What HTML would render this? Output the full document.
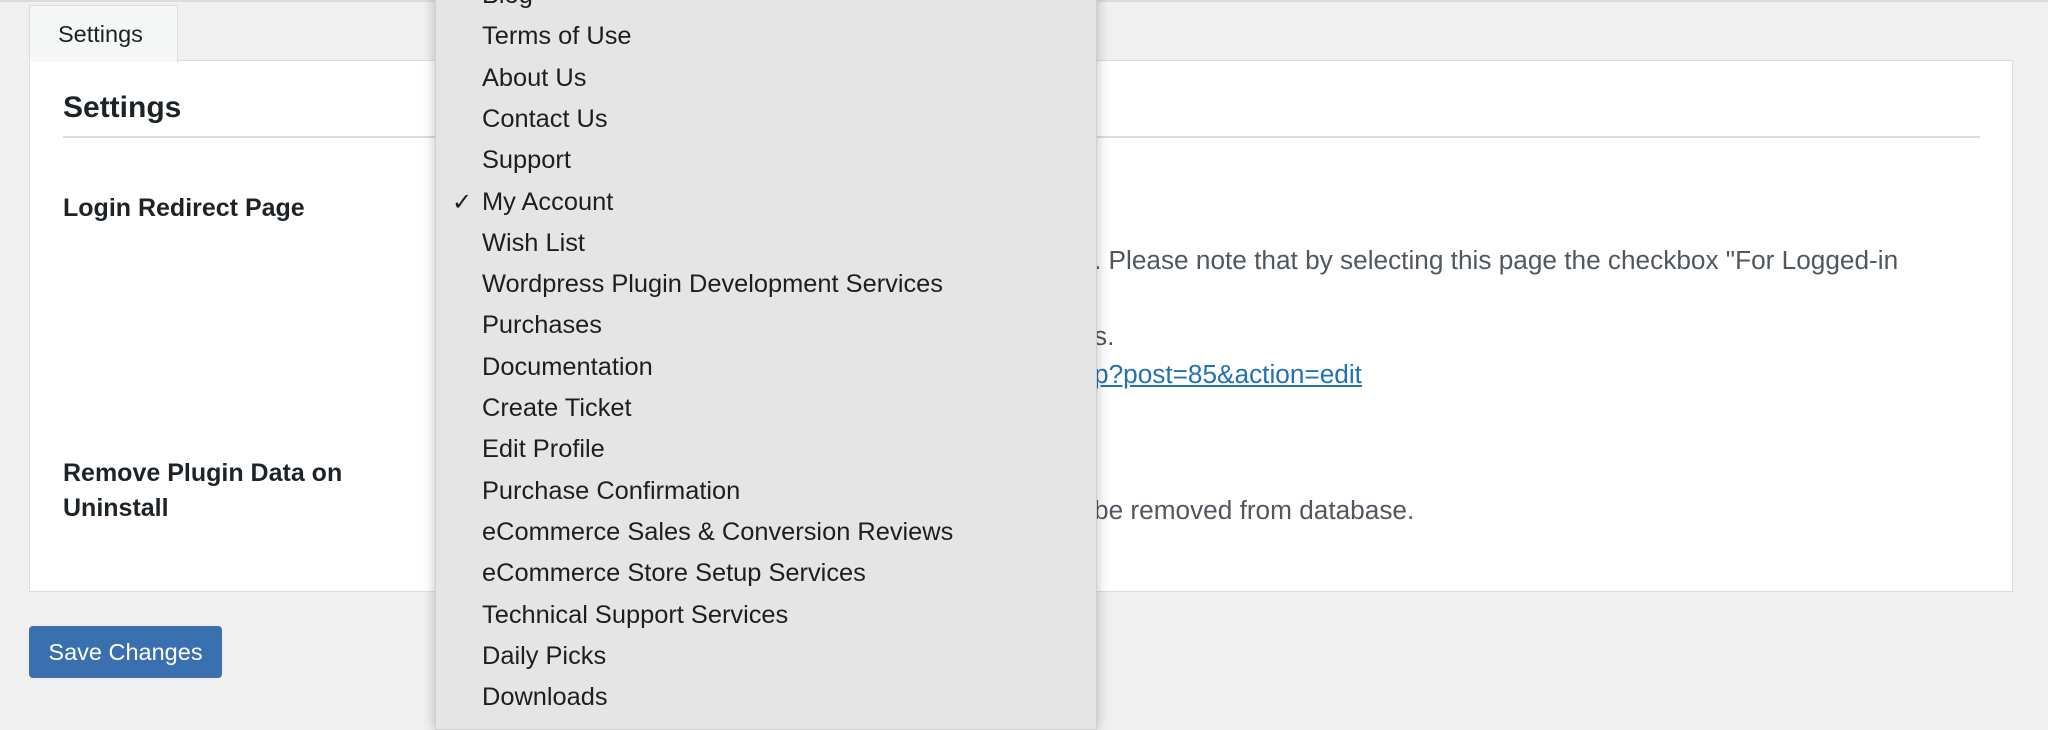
<!DOCTYPE html>
<html><head><meta charset="utf-8"><style>
*{margin:0;padding:0;box-sizing:border-box}
body{width:2048px;height:716px;overflow:hidden;background:#f0f0f1;font-family:"Liberation Sans",sans-serif;position:relative;color:#1d2327}
.a{position:absolute;white-space:nowrap}
.topline{left:0;top:0;width:2048px;height:2px;background:#dcdcde}
.tab{left:29px;top:5px;width:149px;height:57px;background:#f6f7f7;border:1px solid #dcdcde;border-bottom:none;z-index:2}
.tab span{position:absolute;left:28px;top:15px;font-size:23.5px;color:#1d2327}
.panel{left:29px;top:60px;width:1984px;height:532px;background:#fff;border:1px solid #dcdcde}
.h{left:63px;top:91px;font-size:30px;font-weight:bold}
.hr{left:63px;top:136px;width:1917px;height:2px;background:#dcdcde}
.lbl{font-size:25px;font-weight:bold;left:63px}
.desc{font-size:26.2px;color:#50575e;left:1094px}
.link{color:#2271b1;text-decoration:underline}
.btn{left:29px;top:626px;width:193px;height:52px;background:#3a6fb0;border-radius:4px;color:#fff;font-size:23.5px;line-height:52px;text-align:center}
.dd{left:435px;top:-10px;width:662px;height:740px;background:#e5e5e5;box-shadow:0 0 12px rgba(0,0,0,.25);border:1px solid #cfcfcf;z-index:5}
.dd div{position:absolute;left:46px;font-size:25.4px;line-height:41.3px;height:41.3px;color:#1e1e1e}
.chk{position:absolute;left:16px;font-size:24px;line-height:41.3px;color:#1e1e1e}
</style></head><body>
<div class="a topline"></div>
<div class="a panel"></div>
<div class="a tab"><span>Settings</span></div>
<div class="a h">Settings</div>
<div class="a hr"></div>
<div class="a lbl" style="top:194px">Login Redirect Page</div>
<div class="a lbl" style="top:459px">Remove Plugin Data on</div>
<div class="a lbl" style="top:494px">Uninstall</div>
<div class="a desc" style="top:245px">. Please note that by selecting this page the checkbox "For Logged-in</div>
<div class="a desc" style="top:321px">s.</div>
<div class="a desc link" style="top:359px">p?post=85&amp;action=edit</div>
<div class="a desc" style="top:495px">be removed from database.</div>
<div class="a btn">Save Changes</div>
<div class="a dd">
<div style="top:-16px">Blog</div>
<div style="top:25.3px">Terms of Use</div>
<div style="top:66.6px">About Us</div>
<div style="top:107.9px">Contact Us</div>
<div style="top:149.2px">Support</div>
<span class="chk" style="top:190.5px">✓</span>
<div style="top:190.5px">My Account</div>
<div style="top:231.8px">Wish List</div>
<div style="top:273.1px">Wordpress Plugin Development Services</div>
<div style="top:314.4px">Purchases</div>
<div style="top:355.7px">Documentation</div>
<div style="top:397px">Create Ticket</div>
<div style="top:438.3px">Edit Profile</div>
<div style="top:479.6px">Purchase Confirmation</div>
<div style="top:520.9px">eCommerce Sales &amp; Conversion Reviews</div>
<div style="top:562.2px">eCommerce Store Setup Services</div>
<div style="top:603.5px">Technical Support Services</div>
<div style="top:644.8px">Daily Picks</div>
<div style="top:686.1px">Downloads</div>
</div>
</body></html>
